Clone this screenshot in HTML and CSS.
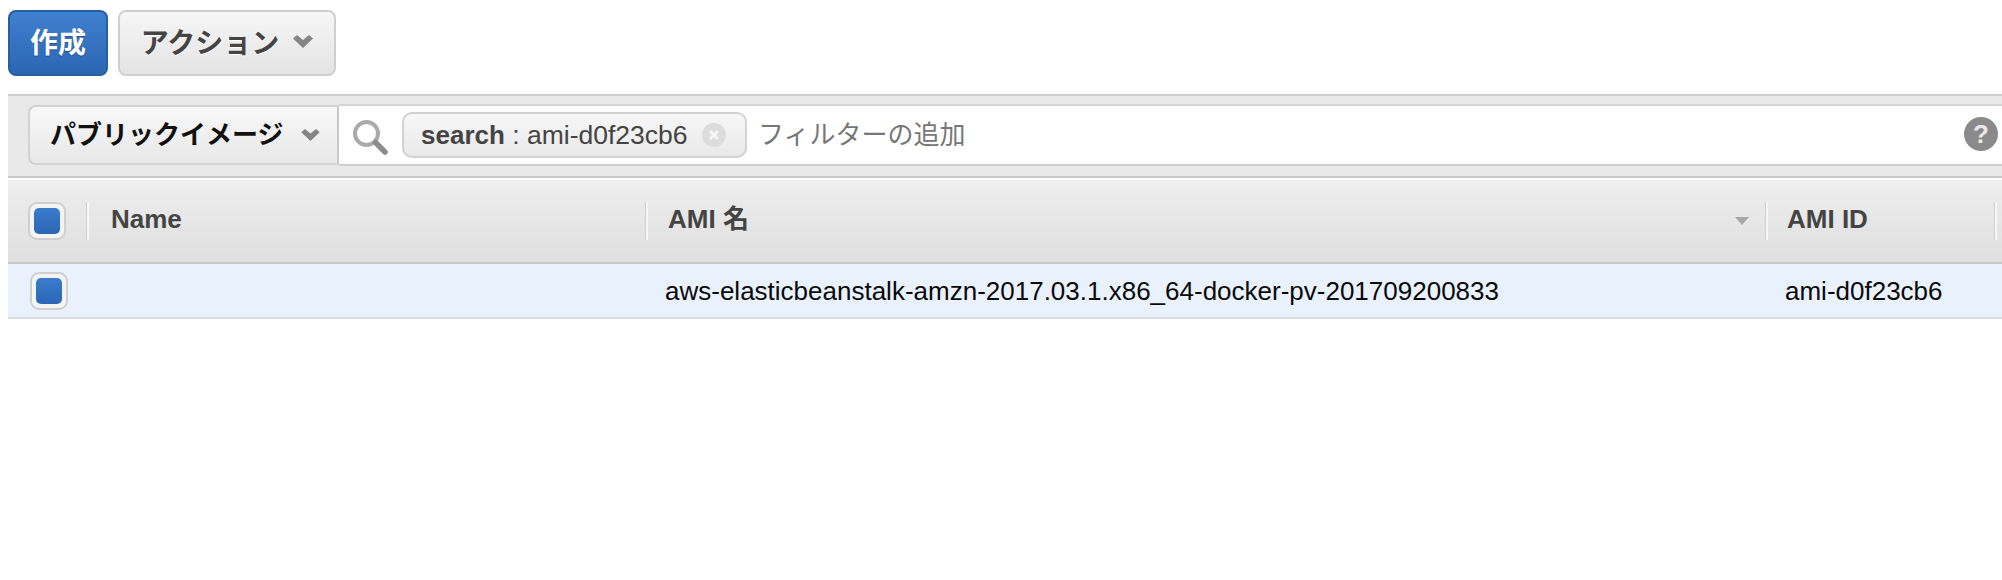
FILE: index.html
```html
<!DOCTYPE html>
<html lang="ja">
<head>
<meta charset="utf-8">
<title>AMI</title>
<link rel="stylesheet" href="styles.css">
</head>
<body>
<div class="toolbar">
  <button class="btn btn-primary">作成</button>
  <button class="btn btn-default">アクション
    <svg class="chev chev-lg" viewBox="0 0 20 13"><path d="M0 3.500L4 0l6 5 6-5 4 3.500L10 13z" fill="#858585"/></svg>
  </button>
</div>
<div class="panel">
  <div class="filter">
    <div class="scope">パブリックイメージ
      <svg class="chev" viewBox="0 0 20 13"><path d="M0 3.500L4 0l6 5 6-5 4 3.500L10 13z" fill="#858585"/></svg>
    </div>
    <div class="search">
      <svg class="mag" viewBox="0 0 36 36"><circle cx="14.500" cy="14.500" r="11.500" fill="none" stroke="#aaaaaa" stroke-width="4"/><path d="M23.500 23.500l9.500 9.500" stroke="#8c8c8c" stroke-width="5.500" stroke-linecap="round"/></svg>
      <div class="token"><b>search</b><span class="token-value">&nbsp;: ami-d0f23cb6</span>
        <svg class="x" viewBox="0 0 24 24"><circle cx="12" cy="12" r="12" fill="#dcdcdc"/><path d="M8 8l8 8M16 8l-8 8" stroke="#f6f6f6" stroke-width="3"/></svg>
      </div>
      <span class="placeholder">フィルターの追加</span>
      <svg class="help" viewBox="0 0 34 34"><circle cx="17" cy="17" r="17" fill="#8a8a8a"/><text x="17" y="26" text-anchor="middle" class="help-q">?</text></svg>
    </div>
  </div>
</div>
<div class="grid head">
  <div class="cell-check"><span class="check"><span class="tick"></span></span></div>
  <div class="col col-name"><span class="sep"></span>Name</div>
  <div class="col col-sort"><span class="sep"></span>AMI 名<svg class="sort" viewBox="0 0 14 8"><path d="M0 0h14L7 8z" fill="#a8a8a8"/></svg></div>
  <div class="col"><span class="sep"></span>AMI ID</div>
  <div class="col"><span class="sep"></span></div>
</div>
<div class="grid row">
  <div class="cell-check cell-check-row"><span class="check"><span class="tick"></span></span></div>
  <div class="cell"></div>
  <div class="cell">aws-elasticbeanstalk-amzn-2017.03.1.x86_64-docker-pv-201709200833</div>
  <div class="cell">ami-d0f23cb6</div>
  <div class="cell"></div>
</div>
</body>
</html>
```
FILE: styles.css
```css
* { box-sizing: border-box; }
html, body { margin: 0; background: #fff; }
body {
  width: 2002px;
  height: 580px;
  overflow: hidden;
  padding-left: 8px;
  font-family: "Liberation Sans", "Noto Sans CJK JP", sans-serif;
  color: #000;
}
.toolbar {
  display: flex;
  gap: 10px;
  padding-top: 10px;
  height: 94px;
}
.btn {
  height: 66px;
  border-radius: 8px;
  font-family: inherit;
  font-size: 28px;
  font-weight: 700;
  line-height: 36px;
  display: flex;
  align-items: center;
  justify-content: center;
  padding: 2px 0 0;
}
.btn-primary {
  width: 100px;
  color: #fff;
  background: linear-gradient(#3f80d0, #2b66b2);
  border: 2px solid #2a5e9f;
  text-shadow: 0 1px 1px rgba(0,0,0,.3);
}
.btn-default {
  width: 218px;
  color: #444;
  background: linear-gradient(#f6f6f6, #e4e4e4);
  border: 2px solid #cfcfcf;
  text-shadow: 0 1px 0 #fff;
}
.chev { width: 20px; height: 13px; margin-left: 16px; flex: none; }
.chev-lg { margin-left: 14px; margin-bottom: 6px; }
.panel {
  height: 84px;
  background: #e9e9e9;
  border-top: 2px solid #cdcdcd;
  border-bottom: 2px solid #c9c9c9;
  padding: 8px 0 0 20px;
}
.filter {
  display: flex;
  align-items: center;
  height: 62px;
}
.scope {
  width: 311px;
  height: 60px;
  flex: none;
  background: linear-gradient(#f8f8f8, #e8e8e8);
  border: 2px solid #d2d2d2;
  border-right-color: #c8c8c8;
  border-radius: 8px 0 0 8px;
  display: flex;
  align-items: center;
  padding-left: 20px;
  font-size: 26px;
  font-weight: 700;
  line-height: 34px;
  color: #111;
  white-space: nowrap;
}
.scope .chev { margin-left: 18px; width: 19px; height: 12px; }
.search {
  flex: 1;
  align-self: stretch;
  background: #fff;
  border-top: 2px solid #d4d4d4;
  border-bottom: 2px solid #d0d0d0;
  display: flex;
  align-items: center;
  padding-left: 13px;
  min-width: 0;
  position: relative;
}
.mag { width: 36px; height: 36px; flex: none; margin-top: 4px; }
.token {
  margin-left: 14px;
  width: 345px;
  height: 46px;
  flex: none;
  border: 2px solid #d2d2d2;
  border-radius: 10px;
  background: linear-gradient(#f7f7f7, #e9e9e9);
  display: flex;
  align-items: center;
  padding: 0 19px 0 17px;
  font-size: 26px;
  line-height: 32px;
  color: #444;
  white-space: nowrap;
}
.token-value { font-size: 26.500px; }
.x { width: 24px; height: 24px; margin-left: auto; flex: none; }
.placeholder {
  margin-left: 11px;
  font-size: 26px;
  line-height: 34px;
  color: #777;
  white-space: nowrap;
}
.help { width: 34px; height: 34px; position: absolute; right: 4px; top: 11px; }
.help-q { font: 700 26px "Liberation Sans", sans-serif; fill: #e8e8e8; }
.grid {
  display: grid;
  grid-template-columns: 78px 559px 1120px 229px 1fr;
}
.head {
  margin-top: 2px;
  height: 84px;
  background: linear-gradient(#eeeeee, #dfdfdf);
  border-bottom: 2px solid #c6c6c6;
  font-size: 26px;
  font-weight: 700;
  color: #444;
  align-items: center;
}
.cell-check { padding-left: 20px; display: flex; align-items: center; }
.cell-check-row { padding-left: 22px; }
.check {
  width: 38px;
  height: 38px;
  border: 2px solid #cfcfcf;
  border-radius: 9px;
  background: #f4f4f4;
  display: flex;
  align-items: center;
  justify-content: center;
  flex: none;
}
.tick {
  width: 26px;
  height: 26px;
  border-radius: 5px;
  background: linear-gradient(#3b7ccc, #2b66b4);
}
.col {
  height: 38px;
  line-height: 32px;
  display: flex;
  align-items: center;
  padding: 0 0 4px 22px;
  position: relative;
  white-space: nowrap;
}
.col-name { padding-left: 25px; }
.sep {
  position: absolute;
  left: 0;
  top: 0;
  bottom: 0;
  width: 3px;
  background: linear-gradient(90deg, #cfcfcf 0 1px, #f7f7f7 1px);
}
.col-sort { padding-right: 16px; padding-left: 23px; }
.sort { width: 14px; height: 8px; margin-left: auto; margin-top: 4px; }
.row {
  height: 55px;
  background: #e9f2fc;
  border-bottom: 2px solid #dcdcdc;
  font-size: 26px;
  line-height: 32px;
  align-items: center;
  color: #0a0a0a;
}
.row .cell { padding-left: 20px; white-space: nowrap; }
```
